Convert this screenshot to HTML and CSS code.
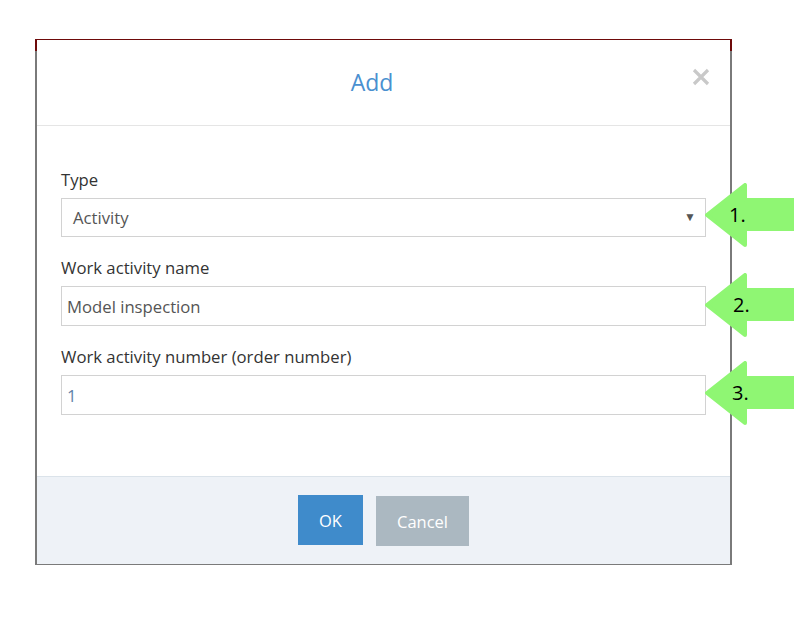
FILE: index.html
```html
<!DOCTYPE html>
<html>
<head>
<meta charset="utf-8">
<link rel="stylesheet" href="styles.css">
</head>
<body>
<div class="frame">
  <div class="modal">
    <div class="header">
      <h1 class="title">Add</h1>
      <span class="close" aria-label="close">
        <svg width="18" height="18" viewBox="0 0 18 18"><path d="M2 2 L16 16 M16 2 L2 16" stroke="#c9c9c9" stroke-width="3.2" stroke-linecap="butt"/></svg>
      </span>
    </div>
    <div class="body">
      <div class="field">
        <label class="label">Type</label>
        <div class="control select"><span>Activity</span><span class="caret">&#9660;</span></div>
      </div>
      <div class="field">
        <label class="label">Work activity name</label>
        <div class="control input">Model inspection</div>
      </div>
      <div class="field">
        <label class="label">Work activity number (order number)</label>
        <div class="control input num">1</div>
      </div>
    </div>
    <div class="footer">
      <button class="btn ok">OK</button>
      <button class="btn cancel">Cancel</button>
    </div>
  </div>
</div>

<div class="marker m1">
  <svg width="90" height="64" viewBox="0 0 90 64"><path d="M3 32 L41 2 L41 17 L92 17 L92 46 L41 46 L41 62 Z" fill="#8ff673" stroke="#8ff673" stroke-width="4" stroke-linejoin="round"/></svg>
  <span class="num-label">1.</span>
</div>
<div class="marker m2">
  <svg width="90" height="64" viewBox="0 0 90 64"><path d="M3 32 L41 2 L41 17 L92 17 L92 46 L41 46 L41 62 Z" fill="#8ff673" stroke="#8ff673" stroke-width="4" stroke-linejoin="round"/></svg>
  <span class="num-label">2.</span>
</div>
<div class="marker m3">
  <svg width="90" height="64" viewBox="0 0 90 64"><path d="M3 32 L41 2 L41 17 L92 17 L92 46 L41 46 L41 62 Z" fill="#8ff673" stroke="#8ff673" stroke-width="4" stroke-linejoin="round"/></svg>
  <span class="num-label">3.</span>
</div>
</body>
</html>
```

FILE: styles.css
```css
html, body {
  margin: 0;
  padding: 0;
  background: #fff;
  font-family: "Open Sans", "Liberation Sans", sans-serif;
  overflow: hidden;
}
body {
  width: 794px;
  height: 626px;
  position: relative;
}
.frame {
  margin: 39px 0 0 35px;
  width: 697px;
  padding: 1px 2px 1px 2px;
  box-sizing: border-box;
  background: linear-gradient(to bottom, #6e0a0a 0, #6e0a0a 12px, #7a7a7a 12px, #7a7a7a 100%);
}
.modal {
  background: #fff;
  display: flex;
  flex-direction: column;
}
.header {
  height: 85px;
  border-bottom: 1px solid #e5e5e5;
  display: flex;
  align-items: center;
  justify-content: center;
  padding-right: 23px;
  position: relative;
}
.title {
  margin: 0;
  font-weight: 400;
  font-size: 23px;
  color: #4a90d0;
  line-height: 30px;
  position: relative;
  top: -1px;
}
.close {
  position: absolute;
  right: 20px;
  top: 28px;
  width: 18px;
  height: 18px;
  display: block;
}
.close svg { display: block; }
.body {
  padding: 43px 24px 61px 24px;
  display: flex;
  flex-direction: column;
  gap: 20px;
}
.field {
  display: flex;
  flex-direction: column;
}
.label {
  font-size: 16.7px;
  line-height: 22px;
  color: #333;
  margin-bottom: 7px;
}
.control {
  box-sizing: border-box;
  border: 1px solid #d2d2d2;
  width: 645px;
  height: 40px;
  font-size: 16.7px;
  color: #555;
  display: flex;
  align-items: center;
}
.select {
  height: 39px;
  padding: 0 9px 0 11px;
  justify-content: space-between;
}
.caret {
  font-size: 12px;
  color: #555;
  position: relative;
  top: -1px;
}
.input {
  padding: 0 5px;
}
.num {
  color: #6282a8;
}
.footer {
  border-top: 1px solid #dbe3ea;
  background: #eef2f7;
  height: 88px;
  box-sizing: border-box;
  padding-top: 18px;
  display: flex;
  justify-content: center;
  align-items: flex-start;
  gap: 13px;
}
.btn {
  border: none;
  font-family: "Open Sans", "Liberation Sans", sans-serif;
  font-size: 16.5px;
  color: #fff;
  height: 50px;
  padding: 0;
  cursor: pointer;
}
.ok {
  width: 65px;
  background: #3f8bcb;
}
.cancel {
  width: 93px;
  background: #abb8c1;
  margin-top: 1px;
}
.marker {
  position: absolute;
  left: 704px;
  width: 90px;
  height: 64px;
}
.marker svg {
  position: absolute;
  left: 0;
  top: 0;
}
.num-label {
  position: absolute;
  left: 25px;
  top: 0;
  height: 64px;
  line-height: 64px;
  font-size: 20px;
  color: #000;
}
.m1 { top: 183px; }
.m2 { top: 273px; }
.m3 { top: 361px; }
.m2 .num-label { left: 29px; }
.m3 .num-label { left: 28px; }
```
